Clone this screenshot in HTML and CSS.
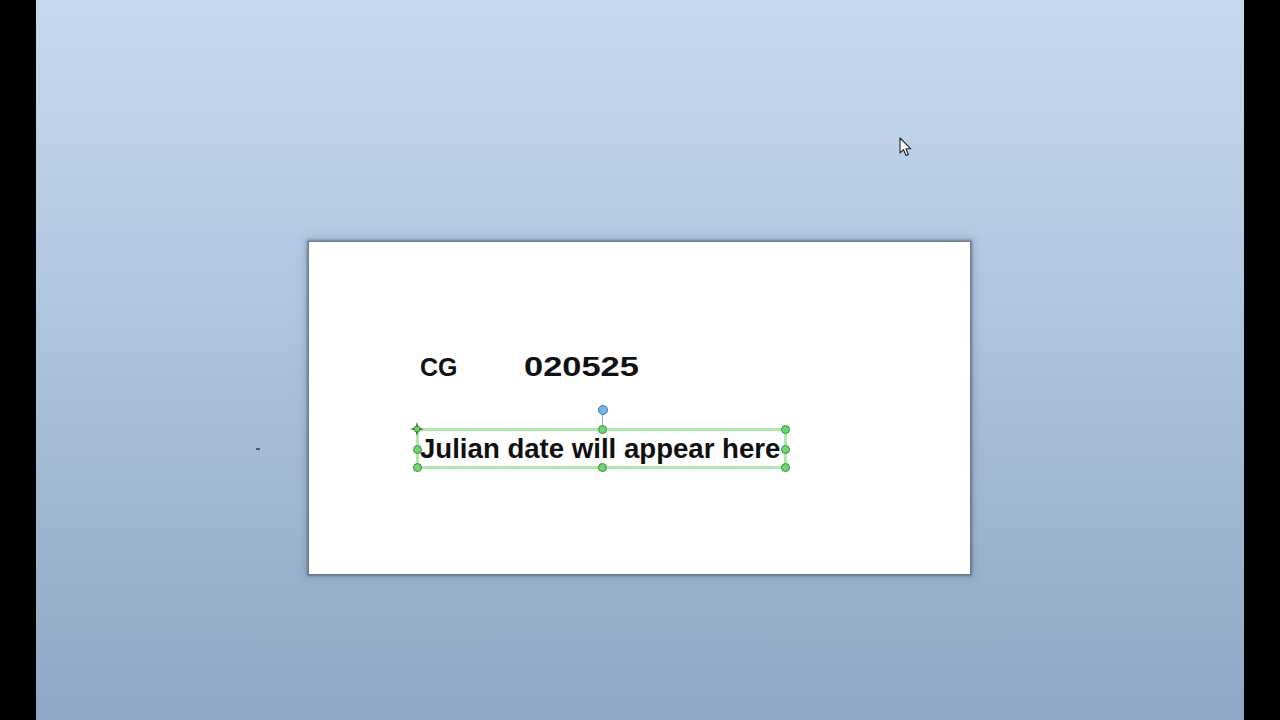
FILE: index.html
```html
<!DOCTYPE html>
<html lang="en">
<head>
    <meta charset="UTF-8">
    <title>Slide - Julian date</title>
    <link rel="stylesheet" href="styles.css">
</head>
<body>
    <div class="bar"></div>
    <div class="stage">
        <span class="speck"></span>
        <div class="slide">
            <div class="code-row">
                <span class="code">CG</span>
                <span class="number">020525</span>
            </div>
            <div class="textbox">
                <span class="rotate-line"></span>
                <span class="handle rotate"></span>
                <svg class="move" width="14" height="14" viewBox="0 0 14 14">
                    <path d="M7 0 L8.6 5.4 L14 7 L8.6 8.6 L7 14 L5.4 8.6 L0 7 L5.4 5.4 Z" fill="#3b6b3b"/>
                    <circle cx="7" cy="7" r="3" fill="#6fcf6f" stroke="#3b7a3b" stroke-width="0.8"/>
                </svg>
                <span class="handle tc"></span>
                <span class="handle tr"></span>
                <span class="handle ml"></span>
                <span class="handle mr"></span>
                <span class="handle bl"></span>
                <span class="handle bc"></span>
                <span class="handle br"></span>
                <span class="label">Julian date will appear here</span>
            </div>
        </div>
        <svg class="cursor" width="14" height="20" viewBox="0 0 14 20">
            <path d="M1 1 L1 16 L4.5 12.6 L7 18.5 L9.4 17.5 L6.9 11.8 L11.8 11.8 Z" fill="#fff" stroke="#222" stroke-width="1.1" stroke-linejoin="round"/>
        </svg>
    </div>
    <div class="bar"></div>
</body>
</html>
```

FILE: styles.css
```css
body {
    margin: 0;
    display: flex;
    height: 720px;
    overflow: hidden;
    font-family: 'Liberation Sans', Arial, sans-serif;
}
.bar {
    width: 36px;
    background-color: #000;
}
.stage {
    flex: 1;
    position: relative;
    background: linear-gradient(to bottom, #c7d9ef 0%, #b2c7e0 40%, #8ea7c4 100%);
    padding-top: 242px;
    padding-left: 273px;
}
.slide {
    width: 661px;
    height: 332px;
    background-color: #fff;
    box-shadow: 0 0 2px 2px rgba(90, 105, 125, 0.75), 0 0 8px 4px rgba(100, 120, 150, 0.35);
    padding-top: 111px;
    box-sizing: border-box;
}
.code-row {
    display: flex;
    align-items: baseline;
    padding-left: 111px;
    color: #111;
    line-height: 1;
}
.code {
    font-size: 25px;
    font-weight: bold;
    width: 104px;
}
.number {
    display: inline-block;
    font-size: 28px;
    font-weight: bold;
    transform: scaleX(1.23);
    transform-origin: left;
}
.textbox {
    position: relative;
    margin-top: 47px;
    margin-left: 107px;
    width: 371px;
    height: 41px;
    box-sizing: border-box;
    border: 3px solid #aeeaae;
    padding-left: 1px;
    line-height: 35px;
}
.label {
    font-size: 27.6px;
    font-weight: bold;
    color: #111;
    white-space: nowrap;
}
.handle {
    position: absolute;
    width: 9px;
    height: 9px;
    border-radius: 50%;
    background-color: #72d372;
    border: 1px solid #3f8f3f;
    box-sizing: border-box;
    z-index: 2;
}
.tc { top: -6px; left: 179px; }
.tr { top: -6px; right: -6px; }
.ml { top: 13.5px; left: -6px; }
.mr { top: 13.5px; right: -6px; }
.bl { bottom: -6px; left: -6px; }
.bc { bottom: -6px; left: 179px; }
.br { bottom: -6px; right: -6px; }
.handle.rotate {
    top: -26px;
    left: 179px;
    width: 10px;
    height: 10px;
    background-color: #70b8e0;
    border-color: #3a7aa8;
}
.rotate-line {
    position: absolute;
    top: -17px;
    left: 183px;
    width: 1px;
    height: 12px;
    background-color: #8aa4b8;
}
.move {
    position: absolute;
    top: -9px;
    left: -9px;
    z-index: 3;
}
.speck {
    position: absolute;
    left: 220px;
    top: 448px;
    width: 4px;
    height: 2px;
    background-color: #4b5d75;
}
.cursor {
    position: absolute;
    left: 863px;
    top: 137px;
}
```
